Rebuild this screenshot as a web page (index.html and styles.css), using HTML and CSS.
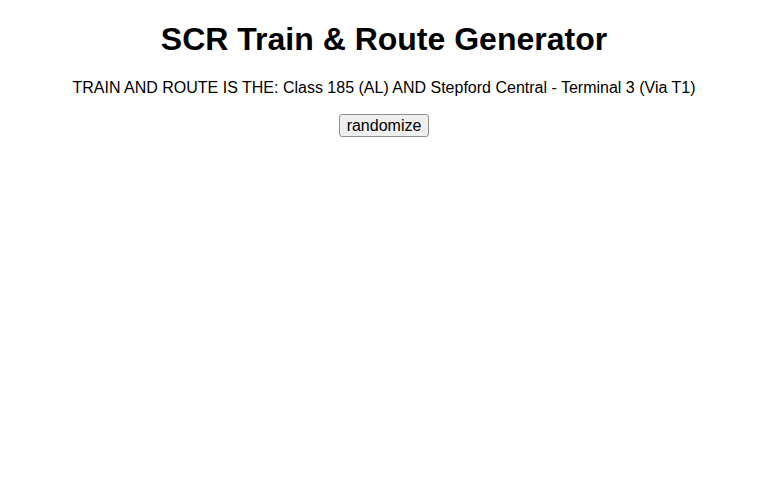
FILE: index.html
```html
<!DOCTYPE html>
<html lang="en">
<head>
	<meta charset="UTF-8">
	<title>SCR Train & Route Generator</title>
	<link rel="stylesheet" href="styles.css">
</head>
<body>
	<div class="page">
		<h1 class="title">SCR Train &amp; Route Generator</h1>
		<p id="result" class="result">TRAIN AND ROUTE IS THE: Class 185 (AL) AND Stepford Central - Terminal 3 (Via T1)</p>
		<button id="randomize" class="randomize">randomize</button>
	</div>
</body>
</html>
```

FILE: styles.css
```css
body {
	margin: 0;
	padding: 1px 8px 8px;
	font-family: "Liberation Sans", Arial, sans-serif;
	color: #000;
	background-color: #fff;
}

.page {
	text-align: center;
}

.title {
	font-size: 32px;
	font-weight: bold;
	margin: 20px 0 21px;
}

.result {
	font-size: 16px;
	margin: 16px 0 17px;
}

.randomize {
	font-family: "Liberation Sans", Arial, sans-serif;
	font-size: 16px;
	line-height: 19px;
	color: #000;
	background-color: #efefef;
	border: 1px solid #8f8f8f;
	border-radius: 3px;
	padding: 1px 7px;
}
```
